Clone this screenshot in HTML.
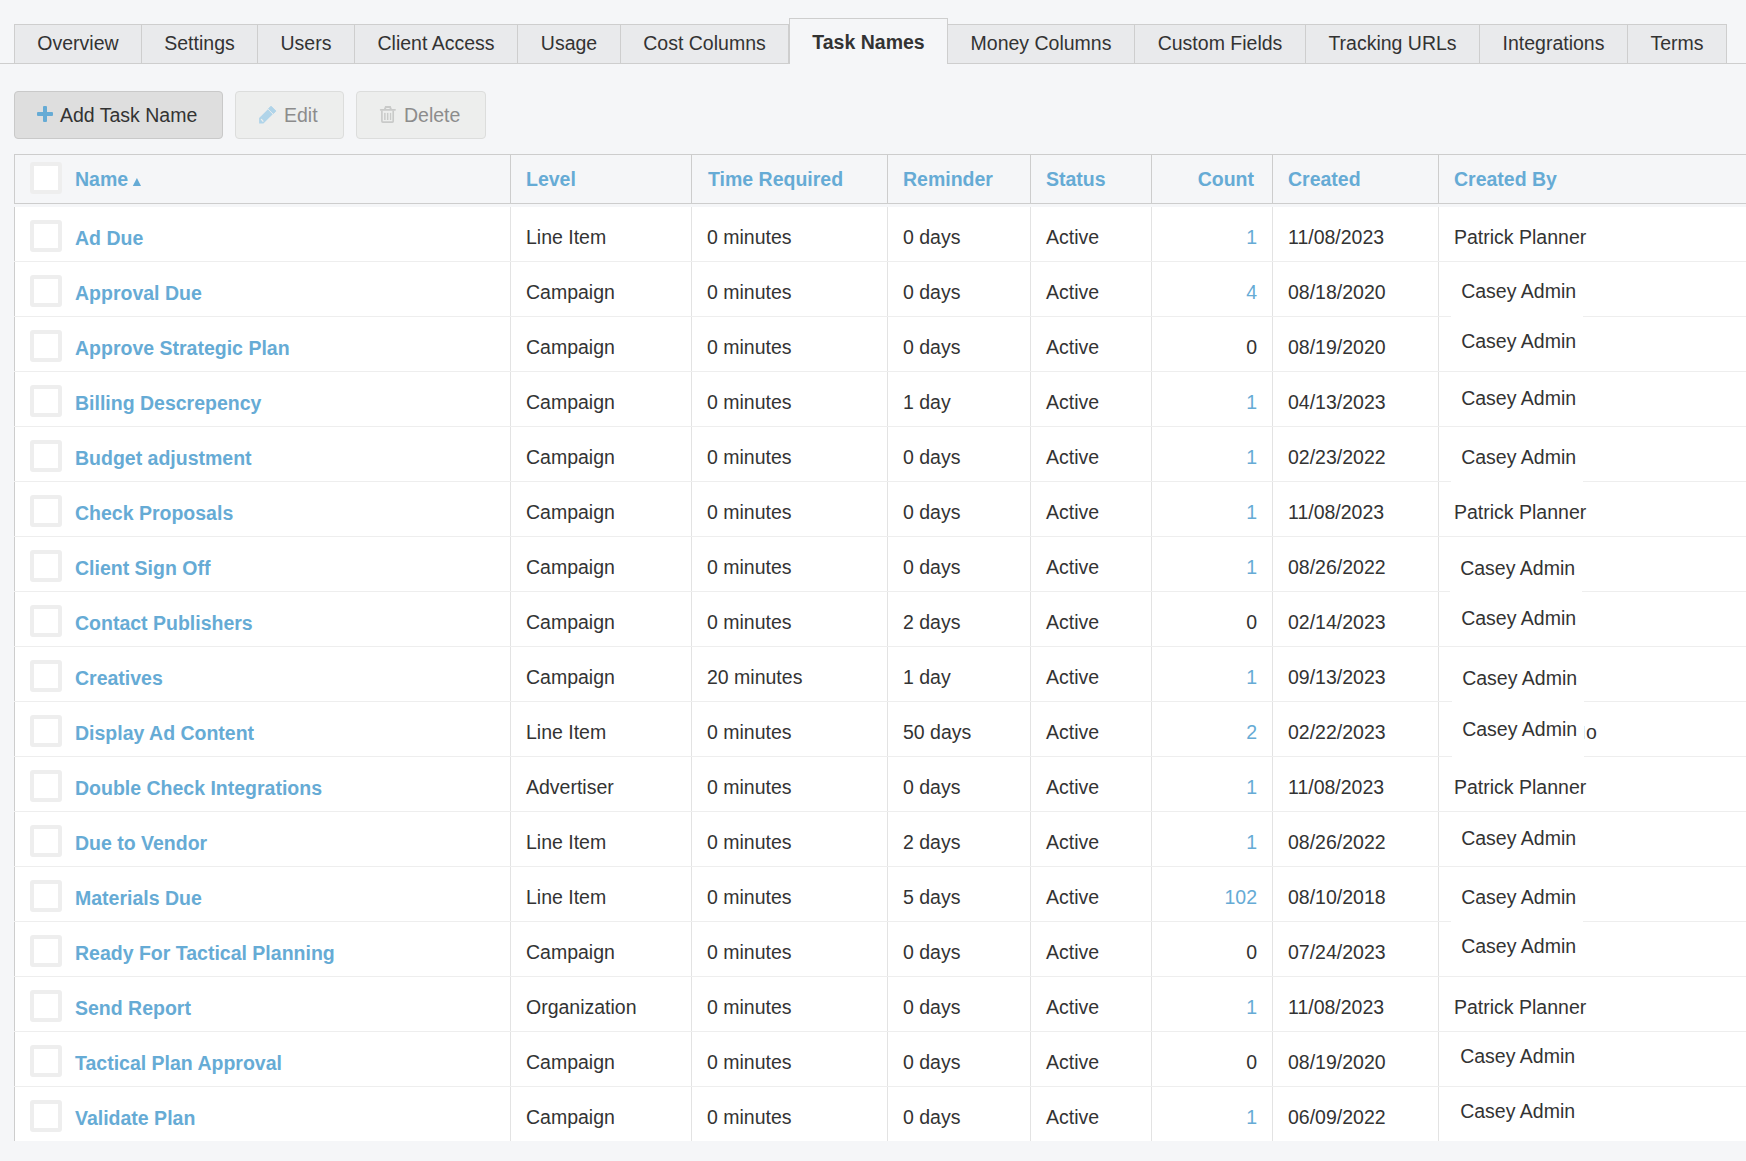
<!DOCTYPE html><html><head><meta charset="utf-8"><title>Task Names</title><style>
html,body{margin:0;padding:0;}
body{width:1746px;height:1161px;overflow:hidden;background:#f5f6f8;font-family:"Liberation Sans",sans-serif;font-size:19.5px;color:#333333;position:relative;}
.a{position:absolute;white-space:nowrap;line-height:20px;}
.tab{position:absolute;top:24px;height:38px;background:#e9eaec;border:1px solid #cecece;border-bottom:none;box-sizing:content-box;}
.tab.act{top:18px;height:45px;background:#f5f6f8;z-index:2;}
.tl{position:absolute;left:0;right:0;text-align:center;white-space:nowrap;line-height:20px;}
.btn{position:absolute;top:91px;height:46px;border:1px solid #c9c9c9;border-radius:4px;background:#dedede;}
.btn.dis{background:#edeeed;border-color:#dcdddc;}
.hl{position:absolute;height:1px;}
.vl{position:absolute;width:1px;}
.cb{position:absolute;width:24px;height:24px;border:4px solid #eeeeee;border-radius:3px;background:#fff;}
.lnk{color:#66abd5;font-weight:bold;}
.h{color:#66abd5;font-weight:bold;}

</style></head><body>
<div class="hl" style="left:0;top:63px;width:1746px;background:#cecece"></div>
<div class="tab" style="left:14px;width:126px"><div class="tl" style="top:7.7px">Overview</div></div>
<div class="tab" style="left:141px;width:115px"><div class="tl" style="top:7.7px">Settings</div></div>
<div class="tab" style="left:257px;width:96px"><div class="tl" style="top:7.7px">Users</div></div>
<div class="tab" style="left:354px;width:162px"><div class="tl" style="top:7.7px">Client Access</div></div>
<div class="tab" style="left:517px;width:102px"><div class="tl" style="top:7.7px">Usage</div></div>
<div class="tab" style="left:620px;width:167px"><div class="tl" style="top:7.7px">Cost Columns</div></div>
<div class="tab act" style="left:789px;width:157px"><div class="tl" style="top:12.5px;font-weight:bold">Task Names</div></div>
<div class="tab" style="left:947px;width:186px"><div class="tl" style="top:7.7px">Money Columns</div></div>
<div class="tab" style="left:1134px;width:170px"><div class="tl" style="top:7.7px">Custom Fields</div></div>
<div class="tab" style="left:1305px;width:173px"><div class="tl" style="top:7.7px">Tracking URLs</div></div>
<div class="tab" style="left:1479px;width:147px"><div class="tl" style="top:7.7px">Integrations</div></div>
<div class="tab" style="left:1627px;width:98px"><div class="tl" style="top:7.7px">Terms</div></div>
<div class="btn" style="left:14px;width:207px"></div>
<div class="a" style="left:60px;top:105px">Add Task Name</div>
<div style="position:absolute;left:37px;top:112px;width:16px;height:4px;border-radius:1px;background:#66abd5"></div>
<div style="position:absolute;left:43px;top:106px;width:4px;height:16px;border-radius:1px;background:#66abd5"></div>
<div class="btn dis" style="left:235px;width:107px"></div>
<div class="a" style="left:284px;top:105px;color:#8c8c8c">Edit</div>
<svg style="position:absolute;left:254px;top:102px" width="26" height="26" viewBox="0 0 26 26">
<path d="M5.15 16.1 L13.93 7.33 L18.75 12.15 L9.4 21.5 L5.15 21.5 Z" fill="#b0d4e9"/>
<path d="M14.63 6.63 L17.03 4.23 L21.85 9.05 L19.45 11.45 Z" fill="#b0d4e9" stroke="#b0d4e9" stroke-width="1" stroke-linejoin="round"/>
<path d="M7.4 17.4 L8.9 19.2" stroke="#edeeed" stroke-width="1.3" stroke-linecap="round"/>
</svg>
<div class="btn dis" style="left:356px;width:128px"></div>
<div class="a" style="left:404px;top:105px;color:#8c8c8c">Delete</div>
<svg style="position:absolute;left:376px;top:102px" width="24" height="24" viewBox="0 0 24 24">
<path d="M7.85 7.2 L9.1 3.9 L14.7 3.9 L15.9 7.2 L14.1 7.2 L13.3 5.9 L10.5 5.9 L9.6 7.2 Z" fill="#c9cac9"/>
<path d="M4.6 7.0 L19.1 7.0 Q19.9 7.0 19.9 7.85 Q19.9 8.7 19.1 8.7 L4.6 8.7 Q3.8 8.7 3.8 7.85 Q3.8 7.0 4.6 7.0 Z" fill="#c9cac9"/>
<path d="M5.9 8.5 L5.9 19.3 Q5.9 20.1 6.8 20.1 L16.4 20.1 Q17.2 20.1 17.2 19.3 L17.2 8.5" fill="none" stroke="#c9cac9" stroke-width="1.65"/>
<rect x="8.1" y="10.9" width="1.5" height="7.1" fill="#c9cac9"/>
<rect x="10.95" y="10.9" width="1.45" height="7.1" fill="#c9cac9"/>
<rect x="13.9" y="10.9" width="1.3" height="7.1" fill="#c9cac9"/>
</svg>
<div class="hl" style="left:14px;top:154px;width:1732px;background:#cdcdcd"></div>
<div class="hl" style="left:14px;top:203px;width:1732px;background:#cdcdcd"></div>
<div class="vl" style="left:14px;top:154px;height:50px;background:#cdcdcd"></div>
<div class="vl" style="left:510px;top:154px;height:50px;background:#cdcdcd"></div>
<div class="vl" style="left:691px;top:154px;height:50px;background:#cdcdcd"></div>
<div class="vl" style="left:887px;top:154px;height:50px;background:#cdcdcd"></div>
<div class="vl" style="left:1030px;top:154px;height:50px;background:#cdcdcd"></div>
<div class="vl" style="left:1151px;top:154px;height:50px;background:#cdcdcd"></div>
<div class="vl" style="left:1272px;top:154px;height:50px;background:#cdcdcd"></div>
<div class="vl" style="left:1438px;top:154px;height:50px;background:#cdcdcd"></div>
<div class="cb" style="left:30px;top:162px"></div>
<svg style="position:absolute;left:132px;top:177px" width="10" height="10" viewBox="0 0 10 10"><path d="M0.8 9 L9 9 L4.9 1 Z" fill="#66abd5"/></svg>
<div class="a h" style="left:75px;top:169px">Name</div>
<div class="a h" style="left:526px;top:169px">Level</div>
<div class="a h" style="left:708px;top:169px">Time Required</div>
<div class="a h" style="left:903px;top:169px">Reminder</div>
<div class="a h" style="left:1046px;top:169px">Status</div>
<div class="a h" style="left:1288px;top:169px">Created</div>
<div class="a h" style="left:1454px;top:169px">Created By</div>
<div class="a h" style="right:492px;top:169px">Count</div>
<div style="position:absolute;left:14px;top:207px;width:1732px;height:934px;background:#fff"></div>
<div class="vl" style="left:14px;top:207px;height:934px;background:#cdcdcd"></div>
<div class="vl" style="left:510px;top:207px;height:934px;background:#e3e3e3"></div>
<div class="vl" style="left:691px;top:207px;height:934px;background:#e3e3e3"></div>
<div class="vl" style="left:887px;top:207px;height:934px;background:#e3e3e3"></div>
<div class="vl" style="left:1030px;top:207px;height:934px;background:#e3e3e3"></div>
<div class="vl" style="left:1151px;top:207px;height:934px;background:#e3e3e3"></div>
<div class="vl" style="left:1272px;top:207px;height:934px;background:#e3e3e3"></div>
<div class="vl" style="left:1438px;top:207px;height:934px;background:#e3e3e3"></div>
<div class="hl" style="left:14px;top:261px;width:1732px;background:#eeeeee"></div>
<div class="cb" style="left:30px;top:220px"></div>
<div class="a lnk" style="left:75px;top:228px">Ad Due</div>
<div class="a" style="left:526px;top:227px">Line Item</div>
<div class="a" style="left:707px;top:227px">0 minutes</div>
<div class="a" style="left:903px;top:227px">0 days</div>
<div class="a" style="left:1046px;top:227px">Active</div>
<div class="a" style="right:489px;top:227px;color:#66abd5">1</div>
<div class="a" style="left:1288px;top:227px">11/08/2023</div>
<div class="a" style="left:1454px;top:227px">Patrick Planner</div>
<div class="hl" style="left:14px;top:316px;width:1732px;background:#eeeeee"></div>
<div class="cb" style="left:30px;top:275px"></div>
<div class="a lnk" style="left:75px;top:283px">Approval Due</div>
<div class="a" style="left:526px;top:282px">Campaign</div>
<div class="a" style="left:707px;top:282px">0 minutes</div>
<div class="a" style="left:903px;top:282px">0 days</div>
<div class="a" style="left:1046px;top:282px">Active</div>
<div class="a" style="right:489px;top:282px;color:#66abd5">4</div>
<div class="a" style="left:1288px;top:282px">08/18/2020</div>
<div class="hl" style="left:14px;top:371px;width:1732px;background:#eeeeee"></div>
<div class="cb" style="left:30px;top:330px"></div>
<div class="a lnk" style="left:75px;top:338px">Approve Strategic Plan</div>
<div class="a" style="left:526px;top:337px">Campaign</div>
<div class="a" style="left:707px;top:337px">0 minutes</div>
<div class="a" style="left:903px;top:337px">0 days</div>
<div class="a" style="left:1046px;top:337px">Active</div>
<div class="a" style="right:489px;top:337px;color:#333333">0</div>
<div class="a" style="left:1288px;top:337px">08/19/2020</div>
<div class="hl" style="left:14px;top:426px;width:1732px;background:#eeeeee"></div>
<div class="cb" style="left:30px;top:385px"></div>
<div class="a lnk" style="left:75px;top:393px">Billing Descrepency</div>
<div class="a" style="left:526px;top:392px">Campaign</div>
<div class="a" style="left:707px;top:392px">0 minutes</div>
<div class="a" style="left:903px;top:392px">1 day</div>
<div class="a" style="left:1046px;top:392px">Active</div>
<div class="a" style="right:489px;top:392px;color:#66abd5">1</div>
<div class="a" style="left:1288px;top:392px">04/13/2023</div>
<div class="hl" style="left:14px;top:481px;width:1732px;background:#eeeeee"></div>
<div class="cb" style="left:30px;top:440px"></div>
<div class="a lnk" style="left:75px;top:448px">Budget adjustment</div>
<div class="a" style="left:526px;top:447px">Campaign</div>
<div class="a" style="left:707px;top:447px">0 minutes</div>
<div class="a" style="left:903px;top:447px">0 days</div>
<div class="a" style="left:1046px;top:447px">Active</div>
<div class="a" style="right:489px;top:447px;color:#66abd5">1</div>
<div class="a" style="left:1288px;top:447px">02/23/2022</div>
<div class="hl" style="left:14px;top:536px;width:1732px;background:#eeeeee"></div>
<div class="cb" style="left:30px;top:495px"></div>
<div class="a lnk" style="left:75px;top:503px">Check Proposals</div>
<div class="a" style="left:526px;top:502px">Campaign</div>
<div class="a" style="left:707px;top:502px">0 minutes</div>
<div class="a" style="left:903px;top:502px">0 days</div>
<div class="a" style="left:1046px;top:502px">Active</div>
<div class="a" style="right:489px;top:502px;color:#66abd5">1</div>
<div class="a" style="left:1288px;top:502px">11/08/2023</div>
<div class="a" style="left:1454px;top:502px">Patrick Planner</div>
<div class="hl" style="left:14px;top:591px;width:1732px;background:#eeeeee"></div>
<div class="cb" style="left:30px;top:550px"></div>
<div class="a lnk" style="left:75px;top:558px">Client Sign Off</div>
<div class="a" style="left:526px;top:557px">Campaign</div>
<div class="a" style="left:707px;top:557px">0 minutes</div>
<div class="a" style="left:903px;top:557px">0 days</div>
<div class="a" style="left:1046px;top:557px">Active</div>
<div class="a" style="right:489px;top:557px;color:#66abd5">1</div>
<div class="a" style="left:1288px;top:557px">08/26/2022</div>
<div class="hl" style="left:14px;top:646px;width:1732px;background:#eeeeee"></div>
<div class="cb" style="left:30px;top:605px"></div>
<div class="a lnk" style="left:75px;top:613px">Contact Publishers</div>
<div class="a" style="left:526px;top:612px">Campaign</div>
<div class="a" style="left:707px;top:612px">0 minutes</div>
<div class="a" style="left:903px;top:612px">2 days</div>
<div class="a" style="left:1046px;top:612px">Active</div>
<div class="a" style="right:489px;top:612px;color:#333333">0</div>
<div class="a" style="left:1288px;top:612px">02/14/2023</div>
<div class="hl" style="left:14px;top:701px;width:1732px;background:#eeeeee"></div>
<div class="cb" style="left:30px;top:660px"></div>
<div class="a lnk" style="left:75px;top:668px">Creatives</div>
<div class="a" style="left:526px;top:667px">Campaign</div>
<div class="a" style="left:707px;top:667px">20 minutes</div>
<div class="a" style="left:903px;top:667px">1 day</div>
<div class="a" style="left:1046px;top:667px">Active</div>
<div class="a" style="right:489px;top:667px;color:#66abd5">1</div>
<div class="a" style="left:1288px;top:667px">09/13/2023</div>
<div class="hl" style="left:14px;top:756px;width:1732px;background:#eeeeee"></div>
<div class="cb" style="left:30px;top:715px"></div>
<div class="a lnk" style="left:75px;top:723px">Display Ad Content</div>
<div class="a" style="left:526px;top:722px">Line Item</div>
<div class="a" style="left:707px;top:722px">0 minutes</div>
<div class="a" style="left:903px;top:722px">50 days</div>
<div class="a" style="left:1046px;top:722px">Active</div>
<div class="a" style="right:489px;top:722px;color:#66abd5">2</div>
<div class="a" style="left:1288px;top:722px">02/22/2023</div>
<div class="hl" style="left:14px;top:811px;width:1732px;background:#eeeeee"></div>
<div class="cb" style="left:30px;top:770px"></div>
<div class="a lnk" style="left:75px;top:778px">Double Check Integrations</div>
<div class="a" style="left:526px;top:777px">Advertiser</div>
<div class="a" style="left:707px;top:777px">0 minutes</div>
<div class="a" style="left:903px;top:777px">0 days</div>
<div class="a" style="left:1046px;top:777px">Active</div>
<div class="a" style="right:489px;top:777px;color:#66abd5">1</div>
<div class="a" style="left:1288px;top:777px">11/08/2023</div>
<div class="a" style="left:1454px;top:777px">Patrick Planner</div>
<div class="hl" style="left:14px;top:866px;width:1732px;background:#eeeeee"></div>
<div class="cb" style="left:30px;top:825px"></div>
<div class="a lnk" style="left:75px;top:833px">Due to Vendor</div>
<div class="a" style="left:526px;top:832px">Line Item</div>
<div class="a" style="left:707px;top:832px">0 minutes</div>
<div class="a" style="left:903px;top:832px">2 days</div>
<div class="a" style="left:1046px;top:832px">Active</div>
<div class="a" style="right:489px;top:832px;color:#66abd5">1</div>
<div class="a" style="left:1288px;top:832px">08/26/2022</div>
<div class="hl" style="left:14px;top:921px;width:1732px;background:#eeeeee"></div>
<div class="cb" style="left:30px;top:880px"></div>
<div class="a lnk" style="left:75px;top:888px">Materials Due</div>
<div class="a" style="left:526px;top:887px">Line Item</div>
<div class="a" style="left:707px;top:887px">0 minutes</div>
<div class="a" style="left:903px;top:887px">5 days</div>
<div class="a" style="left:1046px;top:887px">Active</div>
<div class="a" style="right:489px;top:887px;color:#66abd5">102</div>
<div class="a" style="left:1288px;top:887px">08/10/2018</div>
<div class="hl" style="left:14px;top:976px;width:1732px;background:#eeeeee"></div>
<div class="cb" style="left:30px;top:935px"></div>
<div class="a lnk" style="left:75px;top:943px">Ready For Tactical Planning</div>
<div class="a" style="left:526px;top:942px">Campaign</div>
<div class="a" style="left:707px;top:942px">0 minutes</div>
<div class="a" style="left:903px;top:942px">0 days</div>
<div class="a" style="left:1046px;top:942px">Active</div>
<div class="a" style="right:489px;top:942px;color:#333333">0</div>
<div class="a" style="left:1288px;top:942px">07/24/2023</div>
<div class="hl" style="left:14px;top:1031px;width:1732px;background:#eeeeee"></div>
<div class="cb" style="left:30px;top:990px"></div>
<div class="a lnk" style="left:75px;top:998px">Send Report</div>
<div class="a" style="left:526px;top:997px">Organization</div>
<div class="a" style="left:707px;top:997px">0 minutes</div>
<div class="a" style="left:903px;top:997px">0 days</div>
<div class="a" style="left:1046px;top:997px">Active</div>
<div class="a" style="right:489px;top:997px;color:#66abd5">1</div>
<div class="a" style="left:1288px;top:997px">11/08/2023</div>
<div class="a" style="left:1454px;top:997px">Patrick Planner</div>
<div class="hl" style="left:14px;top:1086px;width:1732px;background:#eeeeee"></div>
<div class="cb" style="left:30px;top:1045px"></div>
<div class="a lnk" style="left:75px;top:1053px">Tactical Plan Approval</div>
<div class="a" style="left:526px;top:1052px">Campaign</div>
<div class="a" style="left:707px;top:1052px">0 minutes</div>
<div class="a" style="left:903px;top:1052px">0 days</div>
<div class="a" style="left:1046px;top:1052px">Active</div>
<div class="a" style="right:489px;top:1052px;color:#333333">0</div>
<div class="a" style="left:1288px;top:1052px">08/19/2020</div>
<div class="cb" style="left:30px;top:1100px"></div>
<div class="a lnk" style="left:75px;top:1108px">Validate Plan</div>
<div class="a" style="left:526px;top:1107px">Campaign</div>
<div class="a" style="left:707px;top:1107px">0 minutes</div>
<div class="a" style="left:903px;top:1107px">0 days</div>
<div class="a" style="left:1046px;top:1107px">Active</div>
<div class="a" style="right:489px;top:1107px;color:#66abd5">1</div>
<div class="a" style="left:1288px;top:1107px">06/09/2022</div>
<div style="position:absolute;left:1451px;top:316px;width:132px;height:1px;background:#fff"></div>
<div style="position:absolute;left:1451px;top:481px;width:132px;height:1px;background:#fff"></div>
<div style="position:absolute;left:1450px;top:591px;width:132px;height:1px;background:#fff"></div>
<div style="position:absolute;left:1452px;top:701px;width:132px;height:1px;background:#fff"></div>
<div style="position:absolute;left:1452px;top:756px;width:132px;height:1px;background:#fff"></div>
<div style="position:absolute;left:1451px;top:921px;width:132px;height:1px;background:#fff"></div>
<div class="a" style="left:1586px;top:722px">o</div>
<div style="position:absolute;left:1584px;top:726px;width:1px;height:13px;background:#d8ecf8"></div>
<div class="a" style="left:1461.2px;top:281px">Casey Admin</div>
<div class="a" style="left:1461.2px;top:331px">Casey Admin</div>
<div class="a" style="left:1461.2px;top:387.5px">Casey Admin</div>
<div class="a" style="left:1461.2px;top:446.5px">Casey Admin</div>
<div class="a" style="left:1460.2px;top:557.5px">Casey Admin</div>
<div class="a" style="left:1461.2px;top:607.5px">Casey Admin</div>
<div class="a" style="left:1462.2px;top:667.5px">Casey Admin</div>
<div class="a" style="left:1462.2px;top:718.5px">Casey Admin</div>
<div class="a" style="left:1461.2px;top:828px">Casey Admin</div>
<div class="a" style="left:1461.2px;top:887px">Casey Admin</div>
<div class="a" style="left:1461.2px;top:936px">Casey Admin</div>
<div class="a" style="left:1460.2px;top:1046px">Casey Admin</div>
<div class="a" style="left:1460.2px;top:1101px">Casey Admin</div>
</body></html>
